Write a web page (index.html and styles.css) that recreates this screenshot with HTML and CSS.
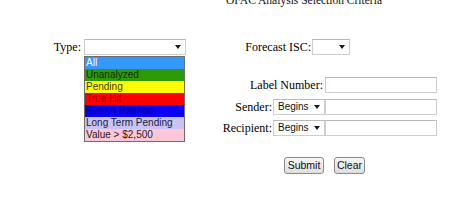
FILE: index.html
```html
<!DOCTYPE html>
<html>
<head>
<meta charset="utf-8">
<link rel="stylesheet" href="styles.css">
</head>
<body>
<div class="page">
  <div class="title">OFAC Analysis Selection Criteria</div>

  <div class="row-top">
    <span class="lbl lbl-type">Type:</span>
    <div class="sel sel-type">
      <span class="arrow"></span>
      <ul class="dropdown">
        <li class="opt opt-all">All</li>
        <li class="opt opt-unanalyzed">Unanalyzed</li>
        <li class="opt opt-pending">Pending</li>
        <li class="opt opt-truehit">True Hit</li>
        <li class="opt opt-return">Return Reason</li>
        <li class="opt opt-longterm">Long Term Pending</li>
        <li class="opt opt-value">Value &gt; $2,500</li>
      </ul>
    </div>
    <span class="lbl lbl-isc">Forecast ISC:</span>
    <div class="sel sel-isc"><span class="arrow"></span></div>
  </div>

  <div class="criteria">
    <span class="lbl lbl-wide">Label Number:</span>
    <div class="inp"></div>

    <span class="lbl">Sender:</span>
    <div class="sel sel-begins">Begins<span class="arrow"></span></div>
    <div class="inp"></div>

    <span class="lbl">Recipient:</span>
    <div class="sel sel-begins">Begins<span class="arrow"></span></div>
    <div class="inp"></div>
  </div>

  <div class="buttons">
    <button class="btn btn-submit">Submit</button>
    <button class="btn btn-clear">Clear</button>
  </div>
</div>
</body>
</html>
```

FILE: styles.css
```css
html, body {
  margin: 0;
  padding: 0;
  background: #ffffff;
}

body {
  width: 474px;
  height: 207px;
  overflow: hidden;
  font-family: "Liberation Serif", "Times New Roman", serif;
  color: #000;
}

.page {
  position: relative;
}

.title {
  margin-top: -6px;
  margin-left: 226px;
  font-size: 11.5px;
  line-height: 12px;
  height: 12px;
  white-space: nowrap;
  color: #111;
}

.lbl {
  font-size: 12px;
  line-height: 16px;
  white-space: nowrap;
  justify-self: end;
  padding-right: 1px;
}

.row-top {
  margin-top: 33px;
  display: grid;
  grid-template-columns: 84px 102px 126px 38px;
  height: 16px;
  align-items: center;
}

.lbl-type {
  padding-right: 3px;
}

.sel {
  position: relative;
  box-sizing: border-box;
  height: 16px;
  background: #fff;
  border: 1px solid #cdcdcd;
  border-top-color: #b9b9b9;
  font-family: "Liberation Sans", Arial, sans-serif;
  font-size: 10px;
  line-height: 14px;
  color: #111;
  padding-left: 4px;
}

.arrow {
  position: absolute;
  right: 4px;
  top: 5px;
  width: 0;
  height: 0;
  border-left: 3px solid transparent;
  border-right: 3px solid transparent;
  border-top: 4px solid #1a1a1a;
}

.dropdown {
  position: absolute;
  z-index: 2;
  left: -1px;
  top: calc(100% + 2px);
  width: 101px;
  box-sizing: border-box;
  margin: 0;
  padding: 0;
  list-style: none;
  border: 1px solid #6d6d6d;
  background: #fff;
}

.opt {
  height: 12px;
  line-height: 12px;
  padding-left: 1px;
  font-family: "Liberation Sans", Arial, sans-serif;
  font-size: 10px;
  white-space: nowrap;
}

.opt-all { background: #3399ff; color: #ffffff; }
.opt-unanalyzed { background: #2f9a08; color: #10300a; }
.opt-pending { background: #ffff00; color: #3a3a00; }
.opt-truehit { background: #ff0000; color: #b40000; }
.opt-return { background: #0a00f5; color: #0000a0; }
.opt-longterm { background: #c9c3f5; color: #1a1a3a; }
.opt-value { background: #fcc7d7; color: #2a1a1f; }

.criteria {
  margin-top: 22px;
  display: grid;
  grid-template-columns: 273px 52px 112px;
  grid-auto-rows: 16px;
  row-gap: 5.5px;
  align-items: center;
}

.lbl-wide {
  grid-column: 1 / 3;
  padding-right: 2px;
}

.inp {
  box-sizing: border-box;
  height: 16px;
  background: #fff;
  border: 1px solid #cdcdcd;
  border-top-color: #b9b9b9;
}

.buttons {
  margin-top: 21px;
  display: flex;
  gap: 10px;
  padding-left: 284px;
}

.btn {
  box-sizing: border-box;
  height: 17px;
  padding: 0;
  margin: 0;
  font-family: "Liberation Sans", Arial, sans-serif;
  font-size: 10.5px;
  line-height: 15px;
  color: #111;
  background: linear-gradient(#f7f7f7, #dedede);
  border: 1px solid #8a8a8a;
  border-radius: 3px;
}

.btn-submit { width: 40px; }
.btn-clear { width: 31px; }
```
